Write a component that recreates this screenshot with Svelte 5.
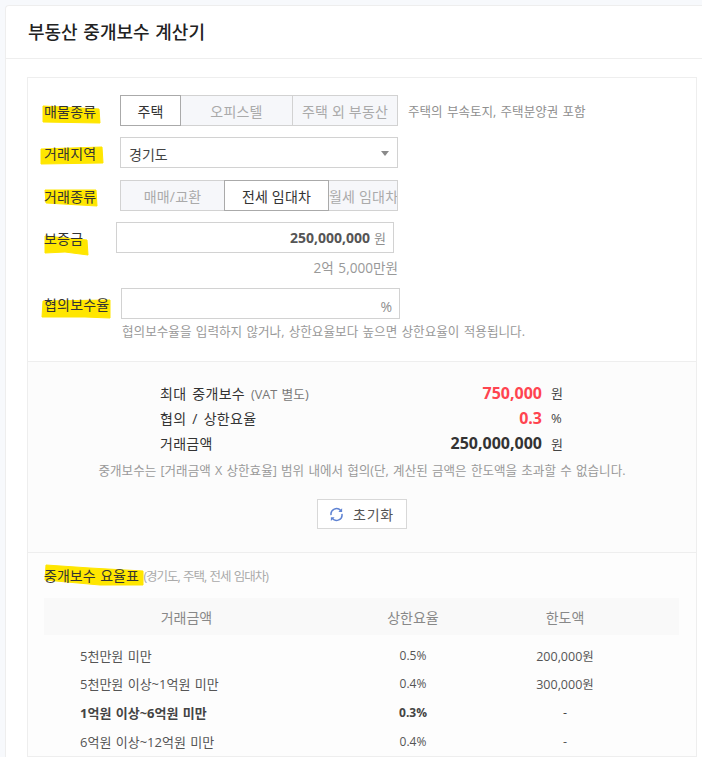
<script>
	const kinds = [
		{ name: '주택', w: 61, on: true },
		{ name: '오피스텔', w: 113 },
		{ name: '주택 외 부동산', w: 106 }
	];
	const deals = [
		{ name: '매매/교환', w: 105 },
		{ name: '전세 임대차', w: 105, on: true },
		{ name: '월세 임대차', w: 70 }
	];
	const rates = [
		{ range: '5천만원 미만', rate: '0.5%', limit: '200,000원' },
		{ range: '5천만원 이상~1억원 미만', rate: '0.4%', limit: '300,000원' },
		{ range: '1억원 이상~6억원 미만', rate: '0.3%', limit: '-', on: true },
		{ range: '6억원 이상~12억원 미만', rate: '0.4%', limit: '-' }
	];
</script>

{#snippet mark(text, points)}
	<span class="mark">
		<svg width="1" height="1" aria-hidden="true"><polygon {points} /></svg>
		<span class="mark-text">{text}</span>
	</span>
{/snippet}

{#snippet toggle(items)}
	<div class="toggle">
		{#each items as item}
			<button class="seg" class:on={item.on} style="width: {item.w}px">{item.name}</button>
		{/each}
	</div>
{/snippet}

<div class="page">
	<div class="card">
		<h1>부동산 중개보수 계산기</h1>
		<div class="body">
			<div class="inner">
				<div class="form">
					<div class="row">
						<div class="label">{@render mark('매물종류', '-1,11 55,14 56,28 -1,27')}</div>
						{@render toggle(kinds)}
						<span class="side">주택의 부속토지, 주택분양권 포함</span>
					</div>
					<div class="row tall">
						<div class="label">{@render mark('거래지역', '-3,12 58,10 59,26 -3,27')}</div>
						<div class="select">경기도<i></i></div>
					</div>
					<div class="row">
						<div class="label">{@render mark('거래종류', '1,10 52,10 53,26 2,23')}</div>
						{@render toggle(deals)}
					</div>
					<div class="row">
						<div class="label short">{@render mark('보증금', '1,14 43,18 44,33 21,30 1,31')}</div>
						<div class="input"><b>250,000,000</b><span>원</span></div>
					</div>
					<div class="korean">2억 5,000만원</div>
					<div class="row">
						<div class="label long">{@render mark('협의보수율', '-1,13 66,12 66,30 41,29 -2,29')}</div>
						<div class="input wide pct"><span>%</span></div>
					</div>
					<p class="help">협의보수율을 입력하지 않거나, 상한요율보다 높으면 상한요율이 적용됩니다.</p>
				</div>

				<div class="result">
					<dl>
						<div class="line">
							<dt>최대 중개보수 <small>(VAT 별도)</small></dt>
							<dd class="red big">750,000</dd>
							<span class="unit">원</span>
						</div>
						<div class="line">
							<dt>협의 / 상한요율</dt>
							<dd class="red">0.3</dd>
							<span class="unit">%</span>
						</div>
						<div class="line">
							<dt>거래금액</dt>
							<dd>250,000,000</dd>
							<span class="unit">원</span>
						</div>
					</dl>
					<p class="note">중개보수는 [거래금액 X 상한효율] 범위 내에서 협의(단, 계산된 금액은 한도액을 초과할 수 없습니다.</p>
					<button class="reset">
						<svg width="15" height="15" viewBox="0 0 16 16" fill="none" stroke="#5f83d3" stroke-width="1.6">
							<path d="M2.2 8.6A5.9 5.9 0 0 1 12.6 3.9" />
							<path d="M13.8 7.4A5.9 5.9 0 0 1 3.4 12.1" />
							<path d="M14 1.2V5.2H10" fill="#5f83d3" stroke="none" />
							<path d="M2 14.8V10.8H6" fill="#5f83d3" stroke="none" />
						</svg>
						초기화
					</button>
				</div>

				<div class="rates">
					<h2>{@render mark('중개보수 요율표', '2,-2 46,1 99,4 99,18 56,18 1,13')} <small>(경기도, 주택, 전세 임대차)</small></h2>
					<table>
						<colgroup>
							<col class="c1" />
							<col class="c2" />
							<col class="c3" />
							<col />
						</colgroup>
						<thead>
							<tr><th>거래금액</th><th>상한요율</th><th>한도액</th><th></th></tr>
						</thead>
						<tbody>
							{#each rates as r}
								<tr class:on={r.on}>
									<td class="range">{r.range}</td>
									<td class="rate">{r.rate}</td>
									<td class="limit">{r.limit}</td>
									<td></td>
								</tr>
							{/each}
						</tbody>
					</table>
				</div>
			</div>
		</div>
	</div>
</div>

<style>
	:global(body) {
		margin: 0;
		background: #f7f9fc;
		overflow: hidden;
	}

	.page {
		height: 757px;
		overflow: hidden;
		padding: 5px 0 0 5px;
		box-sizing: border-box;
		font-family: 'Open Sans', 'Noto Sans CJK KR', sans-serif;
		font-size: 14px;
		word-spacing: 1px;
		color: #333;
	}

	.card {
		background: #fff;
		border: 1px solid #eee;
		border-right: 0;
		border-bottom: 0;
		border-top-left-radius: 4px;
		min-height: 760px;
	}

	h1 {
		margin: 0;
		height: 53px;
		box-sizing: border-box;
		padding-left: 22px;
		font-size: 18px;
		font-weight: 500;
		line-height: 52px;
		word-spacing: 1px;
		color: #222;
		border-bottom: 1px solid #eee;
	}

	.body {
		padding: 18px 6px 0 21px;
	}

	.inner {
		border: 1px solid #eee;
		width: 668px;
	}

	.form {
		padding: 17px 16px 20px;
		height: 283px;
		box-sizing: border-box;
	}

	.row {
		display: flex;
		align-items: flex-start;
		height: 31px;
		margin-bottom: 11px;
	}
	.row.tall {
		margin-bottom: 12px;
	}

	.label {
		width: 76px;
		height: 31px;
		line-height: 33px;
		letter-spacing: 0.2px;
		flex: none;
	}
	.label.short {
		width: 72px;
	}
	.label.long {
		width: 77px;
	}

	.mark {
		position: relative;
		display: inline-block;
		white-space: nowrap;
	}
	.mark svg {
		position: absolute;
		left: 0;
		top: 0;
		overflow: visible;
	}
	.label .mark {
		display: block;
		height: 31px;
	}
	.mark polygon {
		fill: #ffe600;
		stroke: #ffe600;
		stroke-width: 1;
		stroke-linejoin: round;
	}
	.mark-text {
		position: relative;
	}

	.toggle {
		display: flex;
		flex: none;
		width: 278px;
		height: 31px;
		box-sizing: border-box;
	}
	.seg {
		box-sizing: border-box;
		flex: none;
		height: 31px;
		padding: 0;
		margin-left: -1px;
		font: inherit;
		letter-spacing: 0.2px;
		color: #aaa;
		background: #f6f7fa;
		border: 1px solid #d2d2d2;
		white-space: nowrap;
		overflow: hidden;
	}
	.seg:first-child {
		margin-left: 0;
	}
	.seg.on {
		position: relative;
		color: #333;
		background: #fff;
		border-color: #aaa;
	}

	.side {
		margin-left: 10px;
		font-size: 12.55px;
		line-height: 33px;
		color: #8f8f8f;
	}

	.select {
		position: relative;
		box-sizing: border-box;
		width: 278px;
		height: 31px;
		padding-left: 8px;
		line-height: 34px;
		color: #444;
		background: #fff;
		border: 1px solid #d2d2d2;
	}
	.select i {
		position: absolute;
		right: 8px;
		top: 13px;
		border: 4px solid transparent;
		border-top: 5px solid #8a8a8a;
		border-bottom: 0;
	}

	.input {
		display: flex;
		justify-content: flex-end;
		align-items: center;
		gap: 4px;
		box-sizing: border-box;
		width: 278px;
		height: 31px;
		padding-right: 7px;
		background: #fff;
		border: 1px solid #d2d2d2;
	}
	.input b {
		font-size: 14px;
		font-weight: 700;
		color: #555;
	}
	.input span {
		font-size: 13px;
		color: #8f8f8f;
	}
	.input.wide {
		width: 279px;
	}
	.pct span {
		margin-top: 6px;
		font-size: 14px;
	}

	.korean {
		width: 354px;
		margin: -5px 0 11px;
		font-size: 13.6px;
		line-height: 18px;
		text-align: right;
		color: #999;
	}

	.help {
		margin: -7px 0 0 78px;
		font-size: 12.6px;
		line-height: 18px;
		color: #999;
		white-space: nowrap;
	}

	.result {
		background: #fcfcfc;
		border-top: 1px solid #eee;
		height: 191px;
		box-sizing: border-box;
		padding-top: 18px;
		text-align: center;
	}

	dl {
		margin: 0 0 0 132px;
		width: 404px;
	}
	.line {
		display: flex;
		align-items: center;
		height: 25.4px;
		text-align: left;
	}
	dt {
		flex: 1;
		letter-spacing: 0.3px;
		word-spacing: 2px;
		color: #333;
	}
	dt small {
		font-size: 12.7px;
		letter-spacing: 0;
		word-spacing: 1px;
		color: #777;
	}
	dd {
		margin: 0;
		font-size: 16px;
		font-weight: 700;
		color: #333;
	}
	dd.red {
		color: #ff4450;
	}
	.unit {
		width: 13px;
		margin-left: 9px;
		font-size: 13px;
		color: #444;
	}

	.note {
		margin: 6px 0 0;
		font-size: 12.55px;
		line-height: 18px;
		color: #999;
		white-space: nowrap;
	}

	.reset {
		display: inline-flex;
		align-items: center;
		justify-content: center;
		gap: 9px;
		box-sizing: border-box;
		width: 90px;
		height: 30px;
		margin: 19px 0 0 -1px;
		padding: 0;
		font: inherit;
		letter-spacing: 0.8px;
		color: #555;
		background: #fff;
		border: 1px solid #d8d8d8;
	}

	.rates {
		background: #fdfdfd;
		border-top: 1px solid #eee;
		padding: 14px 16px 0;
	}

	h2 {
		margin: 0 0 13px;
		font-size: 14px;
		font-weight: 400;
		line-height: 17px;
		color: #333;
		white-space: nowrap;
	}
	h2 .mark svg {
		top: 0;
	}
	h2 small {
		font-size: 12.5px;
		color: #aaa;
		letter-spacing: -1px;
	}

	table {
		width: 635px;
		border-collapse: collapse;
		table-layout: fixed;
	}
	.c1 {
		width: 285px;
	}
	.c2 {
		width: 168px;
	}
	.c3 {
		width: 136px;
	}
	th {
		height: 37px;
		padding: 0;
		font-size: 14px;
		font-weight: 400;
		color: #888;
		background: #f9f9f9;
	}
	td {
		height: 28.67px;
		padding: 0;
		font-size: 13px;
		text-align: center;
		color: #555;
	}
	td.range {
		padding-left: 36px;
		text-align: left;
	}
	td.rate {
		font-size: 12px;
	}
	td.limit {
		font-size: 12.5px;
	}
	tbody tr:first-child td {
		padding-top: 6px;
	}
	tr.on td {
		font-weight: 700;
		color: #444;
	}
	tr.on td.limit {
		font-weight: 400;
	}
</style>
